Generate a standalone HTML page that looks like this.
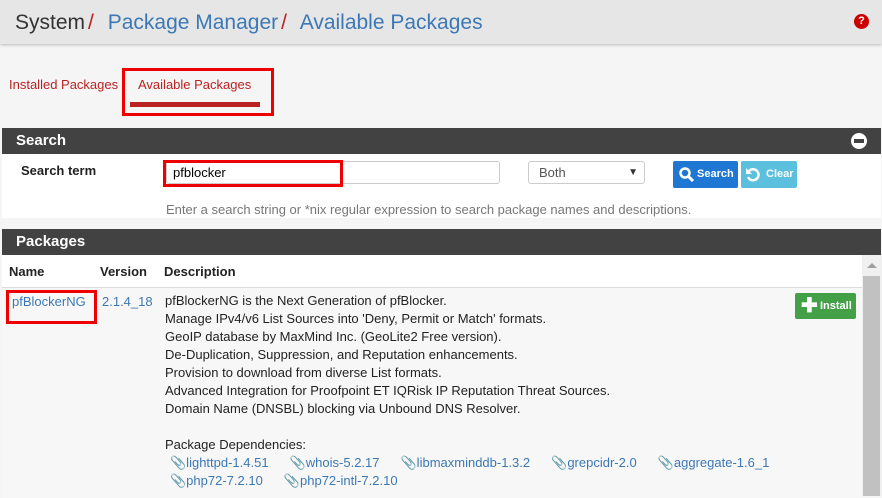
<!DOCTYPE html>
<html><head><style>
body{margin:0;width:882px;height:496px;overflow:hidden;background:#f5f5f5;font-family:"Liberation Sans",sans-serif;font-size:13px;color:#222;position:relative}
.hdr{position:absolute;left:0;top:0;width:882px;height:44px;background:#e6e6e6;box-shadow:0 1px 3px #bbb}
.hdr .t{position:absolute;left:15px;top:11px;font-size:21px;color:#333}
.hdr .t a{color:#3c78b5}
.hdr .t i{font-style:normal;color:#b22;margin:0 8px 0 3px}
.help{position:absolute;right:13px;top:14px;width:15px;height:15px;border-radius:50%;background:#c00;color:#fff;font-size:11px;font-weight:bold;text-align:center;line-height:15px}
.tab{position:absolute;top:77px;color:#b22;font-size:13px}
.box{position:absolute;border:3px solid #e00;box-sizing:border-box}
.ph{position:absolute;left:2px;width:879px;height:26px;background:#424242;color:#fff;font-weight:bold;font-size:15px;line-height:26px;text-indent:14px}
.pb{position:absolute;left:2px;width:879px;background:#fff}
input,.sel{position:absolute;box-sizing:border-box;border:1px solid #ccc;border-radius:3px;background:#fff;font-size:13px}
.btn{position:absolute;color:#fff;font-size:11px;border-radius:2px;font-weight:bold}
.dep{color:#3c78b5;margin-right:21px}
.desc div{height:18px;line-height:18px}
</style></head><body>
<div class="hdr"><div class="t">System<i>/</i> <a>Package Manager</a><i>/</i> <a>Available Packages</a></div><div class="help">?</div></div>
<div class="tab" style="left:9px">Installed Packages</div>
<div class="tab" style="left:138px">Available Packages</div>
<div style="position:absolute;left:130px;top:102px;width:130px;height:5px;background:#b22"></div>
<div class="box" style="left:122px;top:68px;width:152px;height:48px"></div>

<div class="ph" style="top:128px">Search</div>
<div style="position:absolute;left:851px;top:133px;width:16px;height:16px;border-radius:50%;background:#fff"><div style="position:absolute;left:3px;top:6px;width:10px;height:4px;background:#424242"></div></div>
<div class="pb" style="top:154px;height:64px">
<div style="position:absolute;left:19px;top:9px;font-weight:bold">Search term</div>
<input style="left:164px;top:7px;width:334px;height:23px;padding-left:6px" value="pfblocker">
<div class="sel" style="left:526px;top:7px;width:117px;height:23px;line-height:21px;padding-left:10px;color:#555">Both<span style="position:absolute;right:6px;font-size:10px;color:#333">▼</span></div>
<div class="btn" style="left:671px;top:7px;width:65px;height:27px;background:#1e77d2;line-height:27px;text-indent:24px"><svg style="position:absolute;left:6px;top:6px" width="15" height="15"><circle cx="6" cy="6" r="4.5" fill="none" stroke="#fff" stroke-width="2.5"/><path d="M9 9l5 5" stroke="#fff" stroke-width="3"/></svg>Search</div>
<div class="btn" style="left:739px;top:7px;width:56px;height:27px;background:#5bc0de;line-height:27px;text-indent:25px"><svg style="position:absolute;left:4px;top:6px" width="16" height="15"><path d="M4 4A5.5 5.5 0 1 1 3 10" fill="none" stroke="#fff" stroke-width="2.5"/><path d="M1 1v6h6z" fill="#fff"/></svg>Clear</div>
<div style="position:absolute;left:164px;top:48px;color:#777">Enter a search string or *nix regular expression to search package names and descriptions.</div>
</div>
<div class="box" style="left:163px;top:160px;width:180px;height:27px"></div>

<div class="ph" style="top:229px">Packages</div>
<div class="pb" style="top:255px;height:241px;width:860px">
<div style="position:absolute;left:0;top:0;width:860px;height:32px;border-bottom:1px solid #ddd;font-weight:bold">
<span style="position:absolute;left:7px;top:9px">Name</span><span style="position:absolute;left:98px;top:9px">Version</span><span style="position:absolute;left:162px;top:9px">Description</span></div>
<div style="position:absolute;left:0;top:33px;width:860px;height:210px;background:#f7f7f7">
<div style="position:absolute;left:10px;top:6px;color:#3c78b5">pfBlockerNG</div>
<div style="position:absolute;left:100px;top:6px;color:#3c78b5">2.1.4_18</div>
<div class="desc" style="position:absolute;left:163px;top:4px">
<div>pfBlockerNG is the Next Generation of pfBlocker.</div>
<div>Manage IPv4/v6 List Sources into 'Deny, Permit or Match' formats.</div>
<div>GeoIP database by MaxMind Inc. (GeoLite2 Free version).</div>
<div>De-Duplication, Suppression, and Reputation enhancements.</div>
<div>Provision to download from diverse List formats.</div>
<div>Advanced Integration for Proofpoint ET IQRisk IP Reputation Threat Sources.</div>
<div>Domain Name (DNSBL) blocking via Unbound DNS Resolver.</div>
<div></div>
<div>Package Dependencies:</div>
<div style="padding-left:5px"><span class="dep">📎lighttpd-1.4.51</span><span class="dep">📎whois-5.2.17</span><span class="dep">📎libmaxminddb-1.3.2</span><span class="dep">📎grepcidr-2.0</span><span class="dep">📎aggregate-1.6_1</span></div>
<div style="padding-left:5px"><span class="dep">📎php72-7.2.10</span><span class="dep">📎php72-intl-7.2.10</span></div>
</div>
<div class="btn" style="left:793px;top:5px;width:61px;height:26px;background:#43a047;line-height:26px;text-indent:25px"><span style="position:absolute;left:6px;top:0;font-size:20px;text-indent:0">✚</span>Install</div>
</div>
</div>
<div style="position:absolute;left:862px;top:255px;width:20px;height:241px;background:#f0f0f0"><div style="position:absolute;left:1px;top:21px;width:17px;height:220px;background:#c1c1c1"></div><div style="position:absolute;left:5px;top:8px;border:5px solid transparent;border-bottom:5px solid #a0a0a0;border-top:0"></div></div>
<div class="box" style="left:6px;top:290px;width:91px;height:34px"></div>
</body></html>
